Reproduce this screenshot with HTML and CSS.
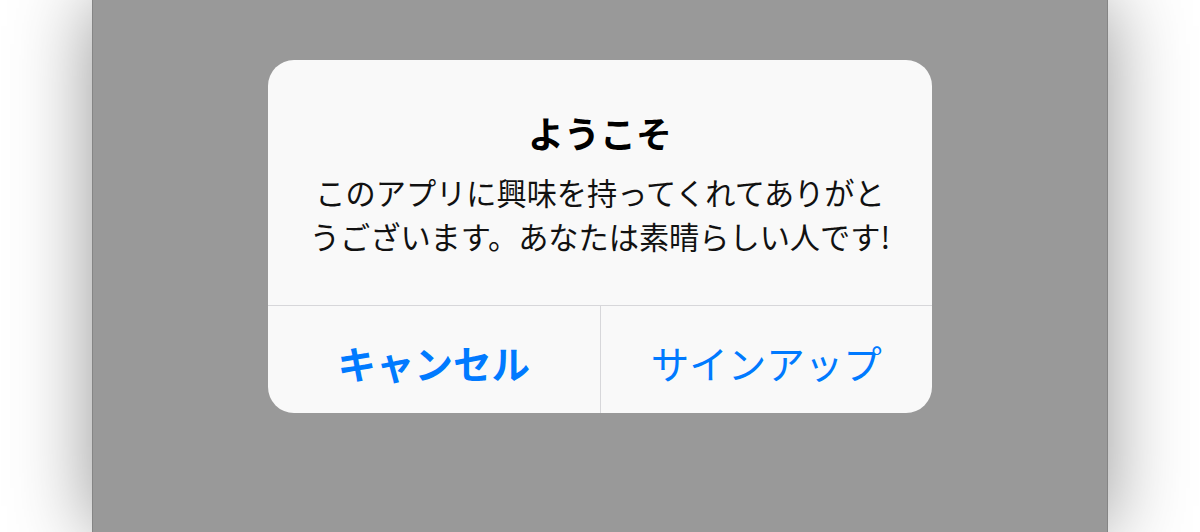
FILE: index.html
```html
<!DOCTYPE html>
<html lang="ja">
<head>
<meta charset="utf-8">
<link rel="stylesheet" href="styles.css">
</head>
<body>
<div class="screen">
  <div class="alert">
    <div class="alert-content">
      <div class="alert-title">ようこそ</div>
      <div class="alert-message">このアプリに興味を持ってくれてありがと<br>うございます。あなたは素晴らしい人です!</div>
    </div>
    <div class="alert-actions">
      <div class="action action-cancel">キャンセル</div>
      <div class="action action-default">サインアップ</div>
    </div>
  </div>
</div>
</body>
</html>
```
FILE: styles.css
```css
html, body {
  margin: 0;
  padding: 0;
  background: #ffffff;
  height: 532px;
  overflow: hidden;
  font-family: "Noto Sans CJK JP", "Noto Sans", sans-serif;
}
.screen {
  width: 1016px;
  height: 532px;
  margin: 0 auto;
  background: #999999;
  border-left: 1px solid #858585;
  border-right: 1px solid #858585;
  box-shadow: 0 0 75px rgba(0, 0, 0, 0.42);
  display: flex;
  flex-direction: column;
  align-items: center;
  padding-top: 60px;
  box-sizing: border-box;
}
.alert {
  width: 664px;
  background: #f9f9f9;
  border-radius: 26px;
  overflow: hidden;
  display: flex;
  flex-direction: column;
}
.alert-content {
  padding: 52px 20px 47px;
  text-align: center;
}
.alert-title {
  font-size: 36px;
  line-height: 40px;
  font-weight: 700;
  color: #000;
  margin-bottom: 18px;
}
.alert-message {
  font-size: 30.2px;
  line-height: 44px;
  color: #111;
}
.alert-actions {
  display: flex;
  border-top: 1px solid #d7d7da;
  height: 107px;
}
.action {
  flex: 1;
  display: flex;
  align-items: center;
  justify-content: center;
  color: #007aff;
  font-size: 38.5px;
  padding-top: 4px;
  box-sizing: border-box;
}
.action-cancel {
  font-weight: 700;
  border-right: 1px solid #d7d7da;
}
```
